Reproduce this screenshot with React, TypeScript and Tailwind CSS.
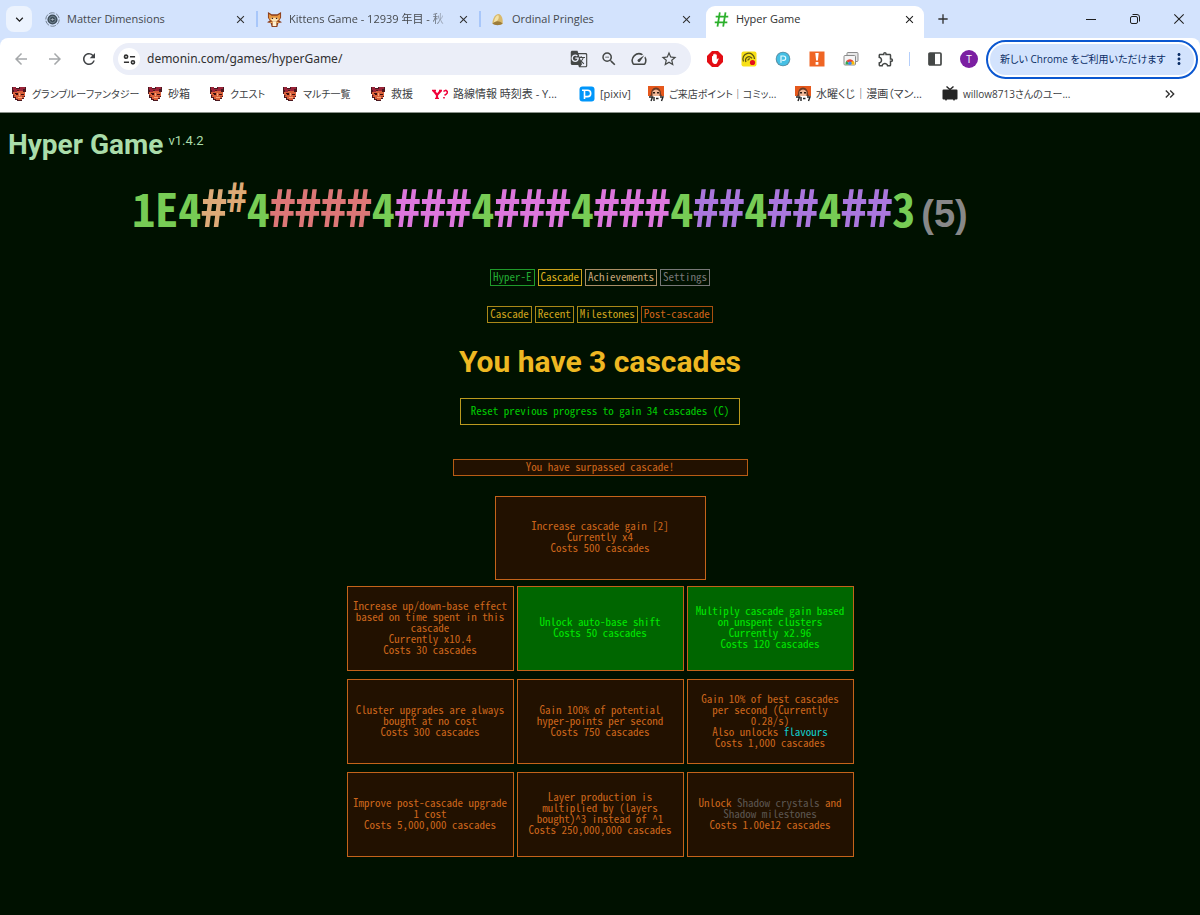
import React from 'react';
import {
  MdArrowBack,
  MdArrowForward,
  MdRefresh,
  MdExpandMore,
  MdClose,
  MdAdd,
  MdZoomOut,
  MdOutlineSpeed,
  MdStarBorder,
  MdGTranslate,
  MdMoreVert,
  MdOutlineExtension,
  MdKeyboardDoubleArrowRight,
} from 'react-icons/md';

const uiFont = "font-['Open_Sans','Noto_Sans_CJK_JP',sans-serif] [font-feature-settings:'palt']";
const monoFont = "font-['Noto_Sans_CJK_JP',monospace] [font-feature-settings:'hwid','liga'_0]";

const DimensionsIcon = () => (
  <svg viewBox="0 0 16 16" className="size-[15px] flex-none">
    <circle cx="8" cy="8" r="7.2" fill="none" stroke="#6f7d8c" strokeWidth="1" strokeDasharray="6 1.5" />
    <circle cx="8" cy="8" r="5.4" fill="#3d4c58" />
    <circle cx="8" cy="8" r="3.4" fill="none" stroke="#7d8e9c" strokeWidth="0.9" />
    <path d="M6 8h4M8 6.6v2.8" stroke="#aebac4" strokeWidth="0.8" />
  </svg>
);

const KittenIcon = () => (
  <svg viewBox="0 0 16 16" className="size-[15px] flex-none">
    <path d="M1 0l4 2.500h6L15 0v6l-2 3 3 2-4 1-1 4H5l-1-4-4-1 3-2-2-3z" fill="#8a3d1c" />
    <path d="M2 2l3 2h6l3-2v4.500L12 9H4L2 6.500z" fill="#e8963c" />
    <path d="M4 6h8v2l-2 2H6L4 8z" fill="#fbe3b4" />
    <path d="M6 10h4v5H6z" fill="#fff0cf" />
    <path d="M5 6h1.500v1.500H5zM9.500 6H11v1.500H9.500z" fill="#40200f" />
    <path d="M2 11l4-1v2zM14 11l-4-1v2z" fill="#f5b45d" />
  </svg>
);

const PringleIcon = () => (
  <svg viewBox="0 0 16 16" className="size-[15px] flex-none">
    <path d="M2.500 12C3 6 6 2 9 2c3.500.5 5 5 4.500 10.500-3 2-8 2-11-.5z" fill="#d9b96a" />
    <path d="M4 11.500C5 6 7 3 9 3.500c1 3 0 6-5 8z" fill="#f3e2a6" />
    <path d="M2.500 12.500c3-3 7-4 11 0-3 2-8 2-11 0z" fill="#9c7c3a" />
  </svg>
);

const HashIcon = () => (
  <svg viewBox="0 0 16 16" className="size-[15px] flex-none">
    <path d="M6.200 0.500L3.700 15.500M12.300 0.500L9.800 15.500M1.800 5h13.400M0.800 11h13.400" stroke="#2bb02b" strokeWidth="1.900" fill="none" />
  </svg>
);

const RestoreIcon = () => (
  <svg viewBox="0 0 12 12" className="size-3" fill="none" stroke="#1f1f1f">
    <rect x="1.500" y="3.500" width="7" height="7" rx="1.500" />
    <path d="M3.500 1.500h4.500a2.500 2.500 0 0 1 2.500 2.500v4.500" />
  </svg>
);

const SiteSettingsIcon = () => (
  <svg viewBox="0 0 14 14" className="size-[13px]" fill="none" stroke="#303030" strokeWidth="1.700">
    <circle cx="3.300" cy="4" r="1.700" />
    <path d="M7.500 4H13M1 10h5.500" />
    <circle cx="10.700" cy="10" r="1.700" />
  </svg>
);

const BlockerIcon = () => (
  <svg viewBox="0 0 16 16" className="size-4">
    <path d="M5 0h6l5 5v6l-5 5H5l-5-5V5z" fill="#e30d14" />
    <path d="M5 9V5.200q.6-.6 1.100 0V3.600q.7-.6 1.200 0V2.900q.7-.6 1.300 0v.9q.6-.6 1.200 0v4.600l1-1q.9-.2.8.6L10 12q-.5.900-1.600.900H7.500Q5.300 12.800 5 9z" fill="#fff" />
  </svg>
);

const RadarIcon = () => (
  <svg viewBox="0 0 16 16" className="size-4">
    <rect x="0.500" y="0.500" width="15" height="15" rx="2" fill="#f8e016" />
    <path d="M2.500 10.500a5.800 5.800 0 1 1 11-2.500M5 11a3.400 3.400 0 1 1 6-3.600M7 9.500a1.500 1.500 0 0 1 2-1.500" fill="none" stroke="#5b5414" strokeWidth="1.300" />
    <circle cx="11.500" cy="11.500" r="2.600" fill="#e5101b" />
  </svg>
);

const BlueBallIcon = () => (
  <svg viewBox="0 0 16 16" className="size-4">
    <circle cx="8" cy="8" r="7.300" fill="#5a8ea3" />
    <circle cx="8" cy="8" r="6.400" fill="#45bfe4" />
    <path d="M6 11.800V5h2.500a2.200 2.200 0 0 1 0 4.400H7.200" fill="none" stroke="#e6fbff" strokeWidth="1.200" />
  </svg>
);

const AlertIcon = () => (
  <svg viewBox="0 0 16 16" className="size-4">
    <path d="M0.500 0.500h15v15h-15z" fill="#ef6524" />
    <path d="M6.300 2h3.400l-.8 7.500H7.100zM6.600 11h2.800v2.700H6.600z" fill="#fff" />
  </svg>
);

const CastIcon = () => (
  <svg viewBox="0 0 16 16" className="size-4">
    <rect x="4" y="1.500" width="11" height="9" rx="1" fill="#e8e8e8" stroke="#8b8b8b" />
    <rect x="1" y="4.500" width="11.500" height="9.500" rx="1" fill="#f5f5f5" stroke="#8b8b8b" />
    <path d="M2.500 13.500a4.500 4.500 0 0 1 1.300-4L7 13.500z" fill="#34a853" />
    <path d="M3.300 10.200a4.300 4.300 0 0 1 7.500.3L7 12z" fill="#ea4335" />
    <path d="M10.800 10.300a4.300 4.300 0 0 1 .7 3.200H7l1.500-3z" fill="#fbbc04" />
    <circle cx="7" cy="12.300" r="1.700" fill="#4285f4" />
  </svg>
);

const PanelIcon = () => (
  <svg viewBox="0 0 14 14" className="size-[14px]">
    <rect x="1" y="1" width="12" height="12" rx="1" fill="none" stroke="#444746" strokeWidth="1.700" />
    <path d="M1 1h6v12H1z" fill="#444746" />
  </svg>
);

const FaceIcon = () => (
  <svg viewBox="0 0 16 16" className="size-4 flex-none" shapeRendering="crispEdges">
    <path d="M1 1h4v1h3V1h7v5h-1v5h-1v2h-2v2H6v-1H4v-2H2V8H1z" fill="#4a1820" />
    <path d="M2 6h3V5h7v1h2v4h-1v2h-2v2H7v-1H5v-2H3V9H2z" fill="#d9603a" />
    <path d="M2 1h3v2h4V1h5v2h-2v2H8V4H6v2H3V4H2z" fill="#9a2338" />
    <path d="M4 7h3v2H5V8H4zM10 8h3v1h-3z" fill="#3a1010" />
    <path d="M8 7h1v3H8zM7 11h4v1H7z" fill="#f6a678" />
    <path d="M3 9h1v1H3zM11 10h2v1h-2z" fill="#a83c28" />
  </svg>
);

const YahooIcon = () => (
  <svg viewBox="0 0 16 16" className="size-4 flex-none" fill="none" stroke="#f0033a">
    <path d="M1.500 4.500L5 9l4-4.500M5 9v3.500" strokeWidth="2.200" />
    <path d="M0 4.500h4M7 4.500h3M3 12.300h4" strokeWidth="1.300" />
    <path d="M11.500 5.500q2-2 3.500-.3t-2.500 4M12 11v1.600" strokeWidth="1.600" />
  </svg>
);

const PixivIcon = () => (
  <svg viewBox="0 0 16 16" className="size-4 flex-none">
    <rect x="0.500" y="0.500" width="15" height="15" rx="3" fill="#0096fa" />
    <path d="M3 4.200h5.500a3.200 3.200 0 0 1 0 6.400H6M5.500 4.200v8.800" fill="none" stroke="#fff" strokeWidth="1.600" />
  </svg>
);

const ComicIcon = () => (
  <svg viewBox="0 0 16 16" className="size-4 flex-none">
    <path d="M0 0h16v10H0z" fill="#e5581c" />
    <path d="M3 8q0-6 5-6.500Q13 2 13 8l1 2H2z" fill="#6b3a24" />
    <path d="M4.500 5.500Q8 1.500 11.500 5.500V10h-7z" fill="#f0b898" />
    <path d="M5 6h2v1.500H5zM9 6h2v1.500H9z" fill="#2e1b12" />
    <path d="M0 10h16v5H0z" fill="#fff" />
    <path d="M1 11h3.500L3 15M6 11v4M8 12.500h2.500M12 11h3l-1.500 4" fill="none" stroke="#222" strokeWidth="1.400" />
  </svg>
);

const TvIcon = () => (
  <svg viewBox="0 0 16 16" className="size-4 flex-none">
    <path d="M4.500 0.500L8 3.500l3.500-3" stroke="#252525" strokeWidth="1.400" fill="none" />
    <path d="M1.500 3.500h13a1 1 0 0 1 1 1v8a1 1 0 0 1-1 1H13l-1 1.500-1-1.500H5L4 15l-1-1.500H1.500a1 1 0 0 1-1-1v-8a1 1 0 0 1 1-1z" fill="#252525" />
  </svg>
);

const tabs = [
  { title: 'Matter Dimensions', icon: <DimensionsIcon />, style: 'w-[222px] border-r-2 pr-[9px]' },
  { title: 'Kittens Game - 12939 年目 - 秋', icon: <KittenIcon />, style: 'w-[223px] border-r-2 pr-[9px]' },
  { title: 'Ordinal Pringles', icon: <PringleIcon />, style: 'w-[225px] pr-[13px]' },
];

const bookmarks = [
  { label: 'グランブルーファンタジー', icon: <FaceIcon />, style: 'w-[136px] text-[10px]' },
  { label: '砂箱', icon: <FaceIcon />, style: 'w-[62px] text-[11px]' },
  { label: 'クエスト', icon: <FaceIcon />, style: 'w-[73px] text-[10px]' },
  { label: 'マルチ一覧', icon: <FaceIcon />, style: 'w-[88px] text-[10px]' },
  { label: '救援', icon: <FaceIcon />, style: 'w-[62px] text-[11px]' },
  { label: '路線情報 時刻表 - Y...', icon: <YahooIcon />, style: 'w-[147px] text-[11px]' },
  { label: '[pixiv]', icon: <PixivIcon />, style: 'w-[69px] text-[11px]' },
  { label: 'ご来店ポイント｜コミッ...', icon: <ComicIcon />, style: 'w-[147px] text-[10px]' },
  { label: '水曜くじ｜漫画（マン...', icon: <ComicIcon />, style: 'w-[147px] text-[11px]' },
  { label: 'willow8713さんのユー...', icon: <TvIcon />, style: 'w-[147px] text-[10px]' },
];

const TabStrip = () => (
  <div className="flex h-[38px] items-center bg-[#d3e3fd]">
    <button aria-label="Search tabs" className="ml-[6px] flex size-[26px] flex-none items-center justify-center rounded-lg bg-[#ecf3fe]">
      <MdExpandMore size={15} color="#1f1f1f" />
    </button>
    <div className="ml-1 flex h-full min-w-0 items-center">
      {tabs.map((tab, index) => (
        <div key={tab.title} className={`flex h-4 min-w-0 items-center border-[#a8c7fa] pl-[9px] ${tab.style}`}>
          {tab.icon}
          <span className={`ml-[7px] min-w-0 flex-1 text-[11px] whitespace-nowrap text-[#45494d] ${index === 1 ? 'mr-2 overflow-hidden [mask-image:linear-gradient(to_right,black_88%,transparent)]' : ''}`}>
            {tab.title}
          </span>
          <button aria-label={`Close ${tab.title}`}><MdClose size={13} color="#303030" /></button>
        </div>
      ))}
      <div className="mt-[6px] flex h-8 w-[218px] min-w-0 items-center self-start rounded-t-[9px] bg-white pr-[8px] pb-[6px] pl-2">
        <HashIcon />
        <span className="ml-[7px] flex-1 text-[11px] text-[#303030]">Hyper Game</span>
        <button aria-label="Close Hyper Game"><MdClose size={13} color="#1f1f1f" /></button>
      </div>
    </div>
    <button aria-label="New tab" className="ml-[11px]"><MdAdd size={16} color="#303030" /></button>
    <div className="ml-auto flex items-center gap-[31px] pr-[14px]">
      <button aria-label="Minimize" className="flex h-4 w-3 items-center"><span className="h-px w-[10px] bg-[#1f1f1f]" /></button>
      <button aria-label="Restore"><RestoreIcon /></button>
      <button aria-label="Close window">
        <svg viewBox="0 0 12 12" className="size-[14px]" stroke="#1f1f1f" strokeWidth="0.900"><path d="M2 2l8 8M10 2l-8 8" /></svg>
      </button>
    </div>
  </div>
);

const Toolbar = () => (
  <div className="bg-[#d3e3fd]">
    <div className="flex h-[42px] items-center rounded-t-lg bg-white pr-[2px] pl-3">
      <div className="flex flex-none items-center gap-4">
        <button aria-label="Back"><MdArrowBack size={18} color="#a5a8aa" /></button>
        <button aria-label="Forward"><MdArrowForward size={18} color="#a5a8aa" /></button>
        <button aria-label="Reload"><MdRefresh size={18} color="#404346" /></button>
      </div>
      <div className="ml-[15px] flex h-8 min-w-0 flex-1 items-center rounded-full bg-[#ebeef8] pr-[13px] pl-[5px]">
        <button aria-label="Site settings" className="flex size-[22px] flex-none items-center justify-center rounded-full bg-white">
          <SiteSettingsIcon />
        </button>
        <input
          aria-label="Address"
          defaultValue="demonin.com/games/hyperGame/"
          className="ml-[7px] min-w-0 flex-1 bg-transparent font-['Noto_Sans',sans-serif] text-[12px] text-[#303030] outline-none"
        />
        <div className="flex flex-none items-center gap-3 text-[#444746]">
          <button aria-label="Translate"><MdGTranslate size={18} /></button>
          <button aria-label="Zoom"><MdZoomOut size={18} /></button>
          <button aria-label="Performance"><MdOutlineSpeed size={18} /></button>
          <button aria-label="Bookmark this page"><MdStarBorder size={18} /></button>
        </div>
      </div>
      <div className="ml-4 flex flex-none items-center gap-[18px]">
        <button aria-label="Ad blocker"><BlockerIcon /></button>
        <button aria-label="Radar"><RadarIcon /></button>
        <button aria-label="Preview"><BlueBallIcon /></button>
        <button aria-label="Alerts"><AlertIcon /></button>
        <button aria-label="Cast"><CastIcon /></button>
        <button aria-label="Extensions"><MdOutlineExtension size={18} color="#444746" /></button>
      </div>
      <div className="ml-[14px] h-[14px] w-px flex-none bg-[#b5cffb]" />
      <button aria-label="Side panel" className="ml-[18px]"><PanelIcon /></button>
      <button aria-label="Profile" className="ml-[18px] flex size-[18px] flex-none items-center justify-center rounded-full bg-[#7b1fa2] text-[10px] text-white">T</button>
      <div className="ml-2 flex-none rounded-full border-2 border-[#0b57d0] p-[2px]">
        <button className="flex h-[31px] w-[204px] items-center justify-between rounded-full bg-[#d3e3fd] pr-[6px] pl-[10px] text-[10px] text-[#0a2d66]">
          新しい Chrome をご利用いただけます
          <MdMoreVert size={18} />
        </button>
      </div>
    </div>
  </div>
);

const BookmarksBar = () => (
  <nav className="flex h-[33px] items-center border-b border-[#8a928a] bg-white pb-1 pl-[11px]">
    {bookmarks.map((item) => (
      <a key={item.label} href="#" className={`flex items-center gap-[5px] whitespace-nowrap text-[#3c4043] ${item.style}`}>
        {item.icon}
        {item.label}
      </a>
    ))}
    <button aria-label="More bookmarks" className="mr-[22px] ml-auto"><MdKeyboardDoubleArrowRight size={16} color="#303030" /></button>
  </nav>
);

// each part of the number is coloured by its hyper level
const numberParts = [
  { text: '1E4', style: 'text-[46px] text-[#77cc55]' },
  { text: '#', style: 'text-[51px] text-[#ddaa77]' },
  { text: '#', style: 'align-[15px] text-[40px] text-[#ddaa77]' },
  { text: '4', style: 'text-[46px] text-[#77cc55]' },
  { text: '####', style: 'text-[51px] text-[#dd7777]' },
  { text: '4', style: 'text-[46px] text-[#77cc55]' },
  { text: '###', style: 'text-[51px] text-[#dd77dd]' },
  { text: '4', style: 'text-[46px] text-[#77cc55]' },
  { text: '###', style: 'text-[51px] text-[#dd77dd]' },
  { text: '4', style: 'text-[46px] text-[#77cc55]' },
  { text: '###', style: 'text-[51px] text-[#dd77dd]' },
  { text: '4', style: 'text-[46px] text-[#77cc55]' },
  { text: '##', style: 'text-[51px] text-[#aa77dd]' },
  { text: '4', style: 'text-[46px] text-[#77cc55]' },
  { text: '##', style: 'text-[51px] text-[#aa77dd]' },
  { text: '4', style: 'text-[46px] text-[#77cc55]' },
  { text: '##', style: 'text-[51px] text-[#aa77dd]' },
  { text: '3', style: 'text-[46px] text-[#77cc55]' },
];

const mainTabs = [
  { label: 'Hyper-E', style: 'border-[#1f9a2a] text-[#22aa33]' },
  { label: 'Cascade', style: 'border-[#cca31c] text-[#ddb01f]' },
  { label: 'Achievements', style: 'border-[#aa8e66] text-[#c8a67c]' },
  { label: 'Settings', style: 'border-[#777777] text-[#777777]' },
];

const cascadeTabs = [
  { label: 'Cascade', style: 'border-[#aa8818] text-[#d0a41e]' },
  { label: 'Recent', style: 'border-[#aa8818] text-[#d0a41e]' },
  { label: 'Milestones', style: 'border-[#aa8818] text-[#d0a41e]' },
  { label: 'Post-cascade', style: 'border-[#a8500f] text-[#d0641a]' },
];

const TabRow = ({ items }: { items: { label: string; style: string }[] }) => (
  <div className="flex justify-center gap-[3px]">
    {items.map((item) => (
      <button key={item.label} className={`h-[17px] border px-[2px] pb-[2px] ${item.style}`}>
        {item.label}
      </button>
    ))}
  </div>
);

const upgrades = [
  { text: 'Increase up/down-base effect based on time spent in this cascade', effect: 'Currently x10.4', cost: '30', canBuy: false },
  { text: 'Unlock auto-base shift', cost: '50', canBuy: true },
  { text: 'Multiply cascade gain based on unspent clusters', effect: 'Currently x2.96', cost: '120', canBuy: true },
  { text: 'Cluster upgrades are always bought at no cost', cost: '300', canBuy: false },
  { text: 'Gain 100% of potential hyper-points per second', cost: '750', canBuy: false },
  {
    text: 'Gain 10% of best cascades per second (Currently 0.28/s)',
    effect: <>Also unlocks <span className="text-[#11cccc]">flavours</span></>,
    cost: '1,000',
    canBuy: false,
  },
  { text: 'Improve post-cascade upgrade 1 cost', cost: '5,000,000', canBuy: false },
  { text: 'Layer production is multiplied by (layers bought)^3 instead of ^1', cost: '250,000,000', canBuy: false },
  {
    text: <>Unlock <span className="text-[#5c5650]">Shadow crystals</span> and <span className="text-[#5c5650]">Shadow milestones</span></>,
    cost: '1.00e12',
    canBuy: false,
  },
];

const Upgrade = ({ text, effect, cost, canBuy, size }: { text: React.ReactNode; effect?: React.ReactNode; cost: string; canBuy: boolean; size: string }) => (
  <button
    className={`flex flex-col items-center justify-center border border-[#c4631a] px-1 pb-[3px] ${size} ${
      canBuy ? 'bg-[#006600] text-[#00e600]' : 'bg-[#221100] text-[#cc661c]'
    }`}
  >
    <span>{text}</span>
    {effect && <span>{effect}</span>}
    <span>Costs {cost} cascades</span>
  </button>
);

const HyperGame = () => (
  <main className={`flex flex-col items-center bg-[#001100] pb-14 text-[11px] leading-[11px] ${monoFont}`}>
    <header className="flex w-full items-start pt-4 pl-2 font-['Roboto',sans-serif] text-[#aaddaa]">
      <h1 className="text-[28px] leading-8 font-bold">Hyper Game</h1>
      <span className="ml-[5px] text-[13px] leading-6">v1.4.2</span>
    </header>

    <div className="mt-[18px] flex h-[58px] w-full items-center justify-center pr-[100px] leading-[58px] font-bold whitespace-nowrap">
      <div>
        {numberParts.map((part, index) => (
          <span key={index} className={part.style}>{part.text}</span>
        ))}
        <span className="ml-[6px] font-['Liberation_Sans',sans-serif] text-[38px] text-[#888888]">(5)</span>
      </div>
    </div>

    <div className="mt-8"><TabRow items={mainTabs} /></div>
    <div className="mt-5"><TabRow items={cascadeTabs} /></div>

    <h2 className="mt-[19px] font-['Roboto',sans-serif] text-[30px] leading-10 font-bold text-[#eeb822]">You have 3 cascades</h2>
    <button className="mt-4 h-[27px] w-[280px] border border-[#bb9a1f] pb-[2px] text-[#00cc00]">
      Reset previous progress to gain 34 cascades (C)
    </button>

    <p className="mt-[34px] flex h-[17px] w-[295px] items-center justify-center border border-[#b85c14] bg-[#221100] pb-[2px] text-[#cc661c]">
      You have surpassed cascade!
    </p>

    <div className="mt-5">
      <Upgrade text="Increase cascade gain [2]" effect="Currently x4" cost="500" canBuy={false} size="h-[84px] w-[211px]" />
    </div>
    <div className="mt-[6px] grid grid-cols-3 gap-x-[3px] gap-y-2">
      {upgrades.map((upgrade) => (
        <Upgrade key={upgrade.cost} {...upgrade} size="h-[85px] w-[167px]" />
      ))}
    </div>
  </main>
);

const App = () => {
  return (
    <div className="min-h-screen bg-[#001100]">
      <div className={uiFont}>
        <TabStrip />
        <Toolbar />
        <BookmarksBar />
      </div>
      <HyperGame />
    </div>
  );
};

export default App;
